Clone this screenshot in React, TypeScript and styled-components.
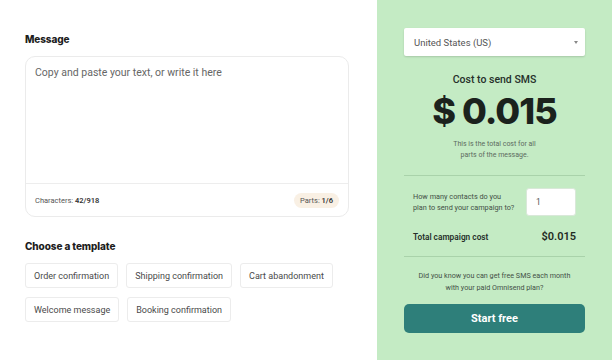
import styled, { createGlobalStyle } from 'styled-components'

const GlobalStyle = createGlobalStyle`
  html, body {
    margin: 0;
    padding: 0;
    background: #ffffff;
  }
  * {
    box-sizing: border-box;
  }
`

const Page = styled.div`
  width: 612px;
  height: 360px;
  display: flex;
  font-family: Roboto, 'Liberation Sans', sans-serif;
  color: #333;
  overflow: hidden;
`

const Editor = styled.section`
  width: 377px;
  padding: 33px 28px 0 25px;
  display: flex;
  flex-direction: column;
  background: #fff;
`

const Heading = styled.h2`
  margin: 0 0 11px;
  font-family: Inter, 'Liberation Sans', sans-serif;
  font-size: 10px;
  font-weight: 800;
  color: #1d1d1d;
  letter-spacing: -0.1px;
`

const MessageBox = styled.div`
  height: 161px;
  border: 1px solid #ebebeb;
  border-radius: 10px;
  display: flex;
  flex-direction: column;
`

const TextArea = styled.div`
  flex: 1;
  padding: 9px 9px;
  font-size: 10.5px;
  color: #666;
  border-bottom: 1px solid #ededed;
`

const Footer = styled.div`
  height: 32px;
  padding: 0 9px;
  display: flex;
  align-items: center;
  justify-content: space-between;
  font-size: 7.5px;
  color: #555;

  b {
    font-weight: 600;
    color: #333;
  }
`

const Badge = styled.span`
  padding: 3px 6px;
  border-radius: 8px;
  background: #f9f0e4;
`

const TemplateHeading = styled(Heading)`
  margin: 23px 0 11px;
`

const TemplateGrid = styled.div`
  display: flex;
  flex-wrap: wrap;
  gap: 9px 8px;
  width: 324px;
`

const Chip = styled.button`
  height: 25px;
  padding: 0 8px;
  border: 1px solid #ececec;
  border-radius: 3px;
  background: #fff;
  font-family: Roboto, 'Liberation Sans', sans-serif;
  font-size: 9px;
  color: #4a4a4a;
`

const Calculator = styled.aside`
  flex: 1;
  background: #c4ebc4;
  padding: 28px 27px 0;
  display: flex;
  flex-direction: column;
  align-items: stretch;
`

const Select = styled.div`
  height: 28px;
  background: #fff;
  border-radius: 2px;
  box-shadow: 0 1px 2px rgba(0, 0, 0, 0.15);
  display: flex;
  align-items: center;
  justify-content: space-between;
  padding: 0 7px 0 10px;
  font-size: 9.5px;
  color: #555;
`

const Caret = styled.span`
  width: 0;
  height: 0;
  border-left: 2px solid transparent;
  border-right: 2px solid transparent;
  border-top: 3px solid #888;
`

const CostLabel = styled.div`
  margin-top: 17px;
  text-align: center;
  font-size: 10.5px;
  font-weight: 500;
  color: #26302a;
`

const Price = styled.div`
  margin-top: 3px;
  text-align: center;
  font-family: Inter, 'Liberation Sans', sans-serif;
  font-size: 36px;
  font-weight: 800;
  line-height: 44px;
  letter-spacing: -1px;
  color: #1b221d;
`

const Note = styled.p`
  margin: 6px 0 0;
  text-align: center;
  font-size: 7px;
  line-height: 11px;
  color: #5d6b60;
`

const Divider = styled.hr<{ $top: number }>`
  margin: ${(p) => p.$top}px 0 0;
  border: 0;
  border-top: 1px solid #a9d2aa;
`

const Row = styled.div<{ $top: number }>`
  margin-top: ${(p) => p.$top}px;
  padding: 0 9px;
  display: flex;
  align-items: center;
  justify-content: space-between;
`

const RowText = styled.span`
  font-size: 7.3px;
  line-height: 11px;
  color: #435046;
`

const RowLabel = styled.span`
  font-size: 8.3px;
  font-weight: 600;
  color: #26302a;
`

const Amount = styled.span`
  font-size: 11px;
  font-weight: 600;
  color: #1f2a22;
`

const NumberInput = styled.div`
  width: 50px;
  height: 28px;
  background: #fff;
  border-radius: 3px;
  border: 1px solid #d9e8d9;
  display: flex;
  align-items: center;
  padding-left: 9px;
  font-size: 8.5px;
  color: #555;
`

const Promo = styled.p`
  margin: 13px 0 0;
  text-align: center;
  font-size: 7.2px;
  line-height: 12px;
  color: #435046;
`

const StartButton = styled.button`
  margin-top: 10px;
  height: 29px;
  border: 0;
  border-radius: 5px;
  background: #2e7f7a;
  color: #fff;
  font-family: Roboto, 'Liberation Sans', sans-serif;
  font-size: 11px;
  font-weight: 700;
`

const templates = [
  'Order confirmation',
  'Shipping confirmation',
  'Cart abandonment',
  'Welcome message',
  'Booking confirmation',
]

export default function App() {
  return (
    <Page>
      <GlobalStyle />
      <Editor>
        <Heading>Message</Heading>
        <MessageBox>
          <TextArea>Copy and paste your text, or write it here</TextArea>
          <Footer>
            <span>
              Characters: <b>42/918</b>
            </span>
            <Badge>
              Parts: <b>1/6</b>
            </Badge>
          </Footer>
        </MessageBox>
        <TemplateHeading>Choose a template</TemplateHeading>
        <TemplateGrid>
          {templates.map((t) => (
            <Chip key={t}>{t}</Chip>
          ))}
        </TemplateGrid>
      </Editor>
      <Calculator>
        <Select>
          United States (US)
          <Caret />
        </Select>
        <CostLabel>Cost to send SMS</CostLabel>
        <Price>$ 0.015</Price>
        <Note>
          This is the total cost for all
          <br />
          parts of the message.
        </Note>
        <Divider $top={14} />
        <Row $top={12}>
          <RowText>
            How many contacts do you
            <br />
            plan to send your campaign to?
          </RowText>
          <NumberInput>1</NumberInput>
        </Row>
        <Row $top={14}>
          <RowLabel>Total campaign cost</RowLabel>
          <Amount>$0.015</Amount>
        </Row>
        <Divider $top={13} />
        <Promo>
          Did you know you can get free SMS each month
          <br />
          with your paid Omnisend plan?
        </Promo>
        <StartButton>Start free</StartButton>
      </Calculator>
    </Page>
  )
}
